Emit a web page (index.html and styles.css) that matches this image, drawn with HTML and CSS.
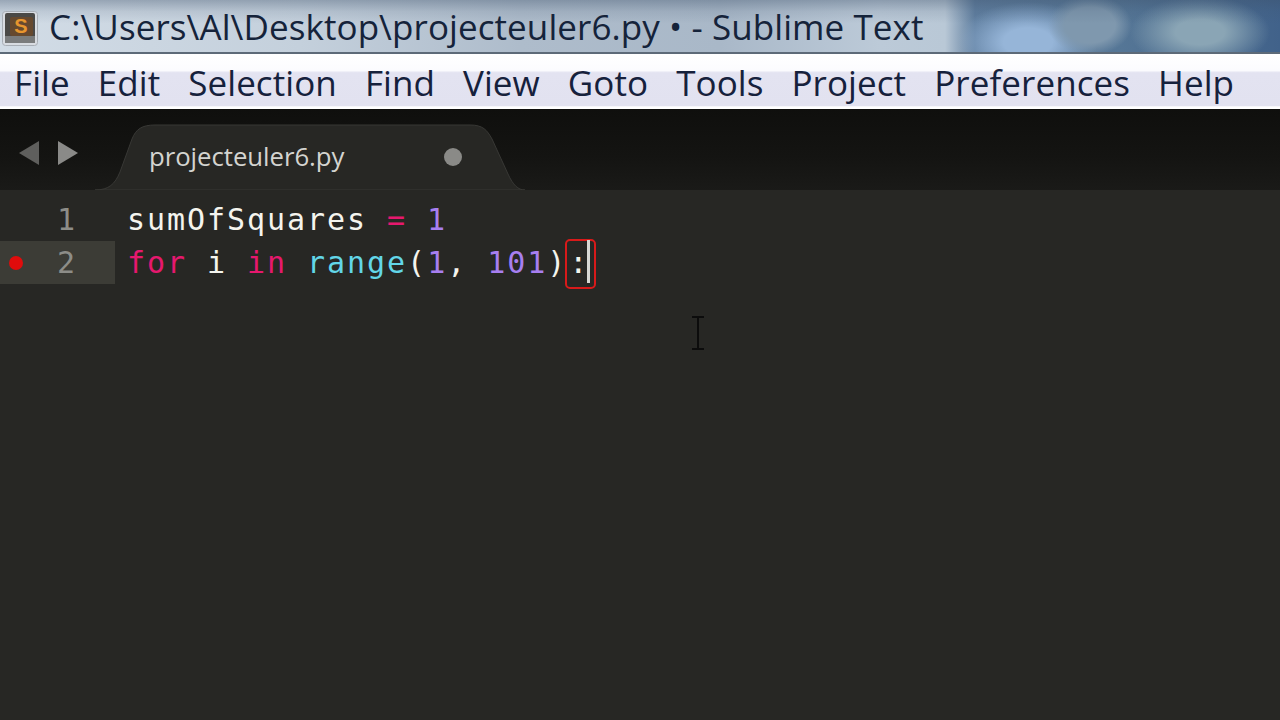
FILE: index.html
```html
<!DOCTYPE html>
<html lang="en">
<head>
<meta charset="utf-8">
<title>projecteuler6.py - Sublime Text</title>
<link rel="stylesheet" href="styles.css">
</head>
<body>
<div class="window">
  <header class="titlebar">
    <svg class="app-icon" width="36" height="35" viewBox="0 0 36 35">
      <rect x="0.5" y="0.5" width="35" height="34" rx="3" fill="#d8dce2" stroke="#a8aeb6"/>
      <rect x="3" y="2" width="30" height="30" rx="2" fill="#4a4947"/>
      <rect x="8" y="6" width="23" height="19" rx="2" fill="#66492f"/>
      <rect x="3" y="25" width="30" height="7" fill="#7a7c7d"/>
      <text x="19" y="22" class="app-icon-s">S</text>
    </svg>
    <span class="title">C:\Users\Al\Desktop\projecteuler6.py • - Sublime Text</span>
  </header>
  <nav class="menubar">
    <span>File</span><span>Edit</span><span>Selection</span><span>Find</span><span>View</span><span>Goto</span><span>Tools</span><span>Project</span><span>Preferences</span><span>Help</span>
  </nav>
  <div class="tabbar">
    <div class="arrows">
      <svg width="22" height="26" viewBox="0 0 22 26"><polygon points="1,13 21,1 21,25" fill="#5f5f5d"/></svg>
      <svg width="22" height="26" viewBox="0 0 22 26"><polygon points="21,13 1,1 1,25" fill="#8a8a88"/></svg>
    </div>
    <div class="tab">
      <svg class="tab-shape" width="430" height="66" viewBox="0 0 430 66" preserveAspectRatio="none">
        <path d="M0 66 C14 66 20 60 25 48 L37 15 C41 5 47 1 60 1 L375 1 C388 1 392 6 397 15 L413 50 C418 61 423 66 430 66 Z" fill="#272724" stroke="#383835"/>
      </svg>
      <span class="tab-name">projecteuler6.py</span>
      <span class="tab-dot"></span>
    </div>
  </div>
  <main class="editor">
    <div class="row">
      <div class="gutter"><span class="num">1</span></div>
      <div class="code"><span class="w">sumOfSquares</span> <span class="k">=</span> <span class="n">1</span></div>
    </div>
    <div class="row">
      <div class="gutter active"><span class="mark"></span><span class="num">2</span></div>
      <div class="code"><span class="k">for</span> <span class="w">i</span> <span class="k">in</span> <span class="f">range</span><span class="w">(</span><span class="n">1</span><span class="w">,</span> <span class="n">101</span><span class="w">)</span><span class="bracket"><span class="w colon">:</span><span class="caret"></span></span></div>
    </div>
    <svg class="ibeam" width="16" height="34" viewBox="0 0 16 34"><path d="M2 1H14M8 1V33M2 33H14" fill="none" stroke="#0c0c0c" stroke-width="2"/></svg>
  </main>
</div>
</body>
</html>
```
FILE: styles.css
```css
* { box-sizing: border-box; }
html, body { margin: 0; height: 100%; background: #272724; }
.window { width: 1280px; height: 720px; display: flex; flex-direction: column; overflow: hidden; font-family: "Open Sans", "Noto Sans", sans-serif; }

.titlebar {
  height: 54px; flex: none; display: flex; align-items: center; gap: 11px; padding: 2px 0 0 2px;
  border-bottom: 2px solid #5d6a78;
  background:
    linear-gradient(180deg, rgba(60,80,105,.38) 0, rgba(60,80,105,.12) 22%, rgba(60,80,105,0) 45%),
    radial-gradient(ellipse 42px 30px at 1090px 25px, #7f98ae 0 60%, rgba(127,152,174,0) 100%),
    radial-gradient(ellipse 70px 36px at 1200px 32px, #8aa5b5 0 35%, rgba(138,165,181,0) 100%),
    radial-gradient(ellipse 70px 40px at 1028px 42px, #96b5d8 0 35%, rgba(150,181,216,0) 100%),
    linear-gradient(90deg, #d2dce6 0, #c4d0dc 300px, #aebccb 520px, #a9b8c8 720px, #bccad8 880px, #b9c8d6 945px, #5f7e9f 975px, #557696 1120px, #41628a 1280px);
}
.app-icon { flex: none; margin-top: 3px; }
.app-icon-s { font: 700 20px "Liberation Sans", sans-serif; fill: #e8962e; text-anchor: middle; }
.title { font-size: 35px; line-height: 44px; color: #15233a; white-space: nowrap; letter-spacing: 0.08px; }

.menubar {
  height: 55px; flex: none; display: flex; align-items: center; gap: 28px; padding: 2px 0 0 14px;
  font-size: 35px; color: #16213c; white-space: nowrap; letter-spacing: 0.08px;
  background: linear-gradient(180deg, #ffffff 0, #fbfbfe 30%, #e3e3f1 34%, #e2e2f0 94%, #ffffff 96%, #ffffff 100%);
}

.tabbar {
  height: 81px; flex: none; display: flex; align-items: flex-end;
  background: linear-gradient(180deg, #0f0f0d 0, #141412 60%, #1a1a18 100%);
}
.arrows { width: 95px; flex: none; align-self: flex-start; display: flex; gap: 17px; padding: 31px 0 0 18px; }
.tab { position: relative; width: 430px; height: 66px; flex: none; display: flex; align-items: center; padding: 0 0 2px 54px; }
.tab-shape { position: absolute; inset: 0; }
.tab-name { position: relative; font-size: 25.75px; color: #d4d4d0; letter-spacing: -0.05px; }
.tab-dot { position: relative; width: 18px; height: 18px; border-radius: 50%; background: #8a8a87; margin-left: 100px; top: 1px; }

.editor { position: relative; flex: 1; padding-top: 8px; background: #272724; }
.row { display: flex; height: 43px; }
.gutter { width: 115px; flex: none; display: flex; align-items: center; justify-content: flex-end; padding-right: 38px; position: relative; }
.gutter.active { background: #3c3c36; }
.num { font-family: "DejaVu Sans Mono", monospace; font-size: 30px; letter-spacing: 1.9px; color: #8d8d88; }
.mark { position: absolute; left: 9px; top: 15px; width: 14px; height: 14px; border-radius: 50%; background: #e00c0c; }
.code { padding-left: 12px; font-family: "DejaVu Sans Mono", monospace; font-size: 30px; letter-spacing: 1.94px; line-height: 43px; white-space: pre; }
.w { color: #f4f4ee; }
.k { color: #e6186e; }
.n { color: #a77ff0; }
.f { color: #62d6e8; }
.colon { position: relative; left: 2px; }
.bracket { position: relative; display: inline-block; }
.bracket::before { content: ""; position: absolute; left: -2px; top: -2px; width: 27px; height: 46px; border: 2px solid #d81a1a; border-radius: 5px; }
.caret { position: absolute; left: 20px; top: -1px; width: 3px; height: 43px; background: #d8d8d4; }
.ibeam { position: absolute; left: 690px; top: 126px; }
```
